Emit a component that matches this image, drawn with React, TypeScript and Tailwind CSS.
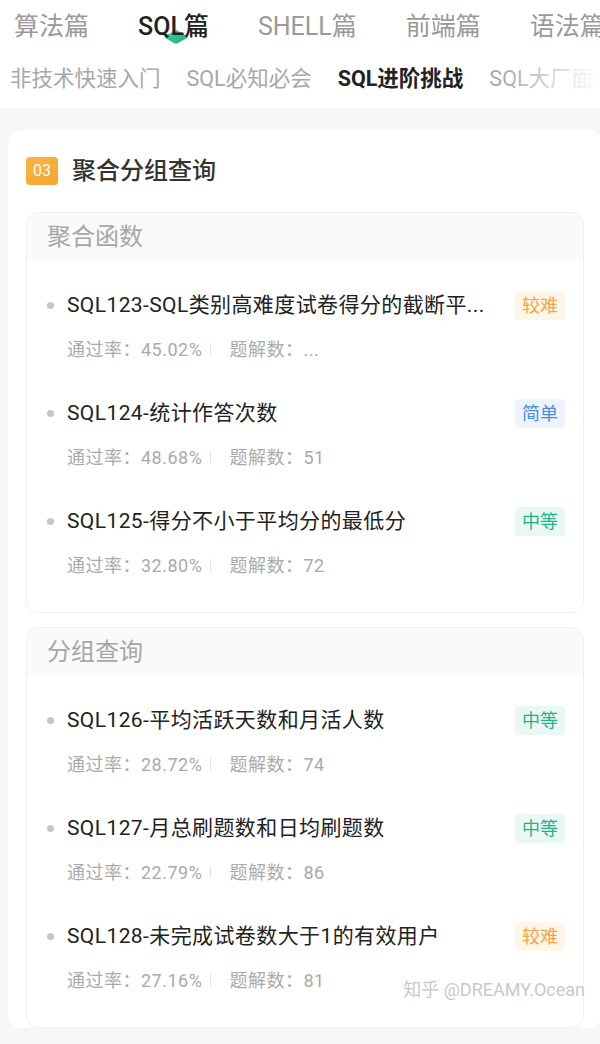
import React from 'react';

type Level = 'hard' | 'easy' | 'mid';

const levels: Record<Level, { label: string; cls: string }> = {
	hard: { label: '较难', cls: 'bg-[#fff6ea] text-[#f2a444]' },
	easy: { label: '简单', cls: 'bg-[#eef4fe] text-[#4a8ae4]' },
	mid: { label: '中等', cls: 'bg-[#eaf8f3] text-[#1db38c]' },
};

const groups = [
	{
		name: '聚合函数',
		items: [
			{ title: 'SQL123-SQL类别高难度试卷得分的截断平...', rate: '45.02%', count: '...', level: 'hard' as Level },
			{ title: 'SQL124-统计作答次数', rate: '48.68%', count: '51', level: 'easy' as Level },
			{ title: 'SQL125-得分不小于平均分的最低分', rate: '32.80%', count: '72', level: 'mid' as Level },
		],
	},
	{
		name: '分组查询',
		items: [
			{ title: 'SQL126-平均活跃天数和月活人数', rate: '28.72%', count: '74', level: 'mid' as Level },
			{ title: 'SQL127-月总刷题数和日均刷题数', rate: '22.79%', count: '86', level: 'mid' as Level },
			{ title: 'SQL128-未完成试卷数大于1的有效用户', rate: '27.16%', count: '81', level: 'hard' as Level },
		],
	},
];

const topTabs = ['算法篇', 'SQL篇', 'SHELL篇', '前端篇', '语法篇'];
const subTabs = ['非技术快速入门', 'SQL必知必会', 'SQL进阶挑战', 'SQL大厂面试真题'];

const Question = ({ title, rate, count, level }: { title: string; rate: string; count: string; level: Level }) => {
	const lv = levels[level];
	return (
		<div className="flex flex-col">
			<div className="flex items-center h-[30px]">
				<span className="w-[7px] h-[7px] rounded-full bg-[#c6c6c6] ml-[20px] mr-[13px] shrink-0" />
				<span className="flex-1 text-[21px] leading-[30px] tracking-[0.4px] text-[#222] whitespace-nowrap">{title}</span>
				<span className={`mr-[18px] w-[50px] h-[29px] rounded-[4px] flex items-center justify-center text-[18px] ${lv.cls}`}>
					{lv.label}
				</span>
			</div>
			<div className="flex items-center h-[24px] mt-[17px] pl-[40px] text-[18px] tracking-[0.5px] text-[#aaa]">
				<span>通过率：{rate}</span>
				<span className="w-px h-[12px] bg-[#e2e2e2] ml-[8px] mr-[18px]" />
				<span>题解数：{count}</span>
			</div>
		</div>
	);
};

const App = () => {
	return (
		<div
			className="relative w-[600px] h-[1044px] overflow-hidden bg-[#f7f7f7]"
			style={{ fontFamily: 'Roboto, "Noto Sans CJK SC", sans-serif' }}
		>
			<div className="bg-white pb-[4px]">
				<div className="flex items-center h-[54px] pl-[14px] gap-[49px] whitespace-nowrap">
					{topTabs.map((t) => (
						<div key={t} className="relative text-[25px] leading-[34px]">
							{t === 'SQL篇' && (
								<svg className="absolute left-[25px] top-[19px]" width="26" height="16" viewBox="0 0 26 16">
									<defs>
										<linearGradient id="g" x1="0" y1="0" x2="1" y2="1">
											<stop offset="0" stopColor="#3fd3a0" />
											<stop offset="1" stopColor="#1fae7c" />
										</linearGradient>
									</defs>
									<path d="M13 1 Q14 1 15 2 L24 7 Q25 8 24 9 L15 14 Q13 15 11 14 L2 9 Q1 8 2 7 L11 2 Q12 1 13 1 Z" fill="url(#g)" />
								</svg>
							)}
							<span className={`relative ${t === 'SQL篇' ? 'text-[#222] font-medium' : 'text-[#9a9a9a]'}`}>{t}</span>
						</div>
					))}
				</div>
				<div className="relative flex items-center h-[50px] pl-[10px] gap-[26px] whitespace-nowrap">
					{subTabs.map((t) => (
						<span
							key={t}
							className={`text-[21.5px] leading-[30px] ${t === 'SQL进阶挑战' ? 'text-[#222] font-bold' : 'text-[#a8a8a8]'}`}
						>
							{t}
						</span>
					))}
					<div className="absolute right-0 top-0 h-full w-[100px] bg-gradient-to-r from-white/0 to-white" />
				</div>
			</div>

			<div className="ml-[8px] mt-[22px] w-[594px] rounded-[14px] bg-white px-[18px] pt-[27px]">
				<div className="flex items-center h-[28px]">
					<span className="w-[32px] h-[28px] rounded-[4px] bg-gradient-to-br from-[#f8b446] to-[#f6a52d] text-white text-[16px] flex items-center justify-center">
						03
					</span>
					<span className="ml-[14px] text-[24px] leading-[28px] font-medium text-[#333]">聚合分组查询</span>
				</div>

				<div className="mt-[27px] flex flex-col gap-[14px]">
					{groups.map((g) => (
						<div key={g.name} className="rounded-[12px] border border-[#efefef] overflow-hidden">
							<div className="h-[47px] bg-[#fafafa] flex items-center pl-[20px] text-[24px] text-[#a6a6a6]">{g.name}</div>
							<div className="flex flex-col gap-[37px] pt-[30px] pb-[35px]">
								{g.items.map((it) => (
									<Question key={it.title} {...it} />
								))}
							</div>
						</div>
					))}
				</div>
			</div>

			<div className="absolute right-[15px] top-[977px] text-[18px] leading-[26px] text-[#c9c9c9] whitespace-nowrap">
				知乎 @DREAMY.Ocean
			</div>
		</div>
	);
};

export default App;
